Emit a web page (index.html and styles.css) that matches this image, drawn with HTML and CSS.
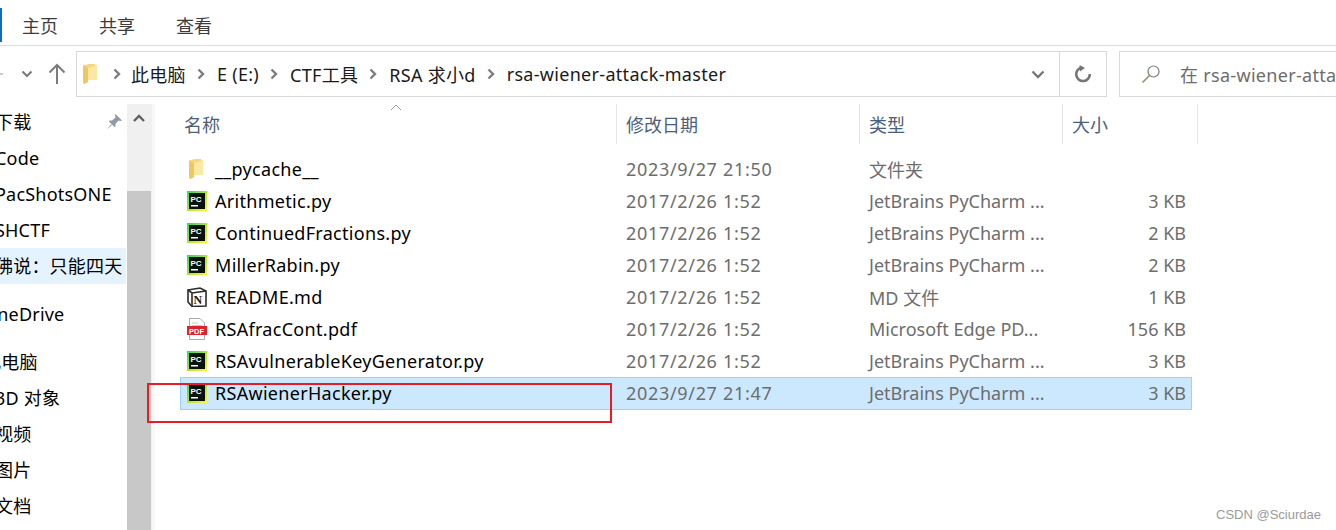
FILE: index.html
```html
<!DOCTYPE html>
<html lang="zh-CN">
<head>
    <meta charset="UTF-8">
    <title>rsa-wiener-attack-master</title>
    <link rel="stylesheet" href="styles.css">
</head>
<body>

    <!-- Shared icons -->
    <svg class="icon-defs" width="0" height="0">
        <symbol id="folder" viewBox="0 0 14 20">
            <path d="M0 1.5 L6 0 H12 V1 H14 V16 H5 V18 L1 20 L0 18 Z" fill="#f5d77f"/>
            <path d="M5 4 L12 2 V1 H14 V16 H5 Z" fill="#fce7a4"/>
            <path d="M0 1.5 L5 4 V18 L1 20 L0 18 Z" fill="#eec75f"/>
        </symbol>
        <symbol id="pycharm" viewBox="0 0 20 20">
            <defs>
                <linearGradient id="pcEdge" x1="0" y1="0" x2="1" y2="1">
                    <stop offset="0" stop-color="#21d789"/>
                    <stop offset="0.45" stop-color="#a8e02c"/>
                    <stop offset="1" stop-color="#fcf84a"/>
                </linearGradient>
            </defs>
            <rect width="20" height="20" fill="url(#pcEdge)"/>
            <rect x="2" y="2" width="16" height="16" fill="#07130c"/>
            <rect x="4" y="14" width="7" height="1.5" fill="#fff"/>
        </symbol>
        <symbol id="notion" viewBox="0 0 20 20">
            <path d="M1 3 L13 1 L19 4 V19 L5 19.5 L1 15 Z" fill="#fff" stroke="#2b2b2b" stroke-width="1.6"/>
            <path d="M1 3 L5 6 L19 4 M5 6 V19" fill="none" stroke="#2b2b2b" stroke-width="1.6"/>
        </symbol>
        <symbol id="pdf" viewBox="0 0 20 22">
            <path d="M2.5 .5 H13 L17.5 5 V21.5 H2.5 Z" fill="#fff" stroke="#a9a9a9"/>
            <path d="M5 5 H11 M5 7.5 H15" stroke="#c8c8c8"/>
            <rect y="8" width="20" height="9" fill="#d9232e"/>
        </symbol>
        <symbol id="crumb" viewBox="0 0 8 12">
            <path d="M1.5 1.5 L6 6 L1.5 10.5" fill="none" stroke="#7d7d7d" stroke-width="2.4"/>
        </symbol>
    </svg>

    <div class="window">

        <!-- Ribbon tabs -->
        <div class="ribbon">
            <span class="file-tab"></span>
            <span class="ribbon-tab">主页</span>
            <span class="ribbon-tab">共享</span>
            <span class="ribbon-tab">查看</span>
        </div>

        <!-- Address + search -->
        <div class="toolbar">
            <div class="nav-buttons">
                <svg class="back-tip" width="3" height="10" viewBox="0 0 3 10"><path d="M0 5 H3" stroke="#c9c9c9" stroke-width="2"/></svg>
                <svg class="recent" width="12" height="8" viewBox="0 0 12 8"><path d="M1.5 1.5 L6 6 L10.5 1.5" fill="none" stroke="#7a7a7a" stroke-width="2"/></svg>
                <svg class="up" width="18" height="22" viewBox="0 0 18 22"><path d="M9 21 V2 M1.5 9.5 L9 2 L16.5 9.5" fill="none" stroke="#7b7b7b" stroke-width="2"/></svg>
            </div>
            <div class="address">
                <svg class="address-folder" width="14" height="20"><use href="#folder"/></svg>
                <svg class="crumb first" width="8" height="12"><use href="#crumb"/></svg>
                <span>此电脑</span>
                <svg class="crumb" width="8" height="12"><use href="#crumb"/></svg>
                <span>E (E:)</span>
                <svg class="crumb" width="8" height="12"><use href="#crumb"/></svg>
                <span>CTF工具</span>
                <svg class="crumb" width="8" height="12"><use href="#crumb"/></svg>
                <span>RSA 求小d</span>
                <svg class="crumb" width="8" height="12"><use href="#crumb"/></svg>
                <span>rsa-wiener-attack-master</span>
                <div class="address-end">
                    <svg class="history" width="14" height="9" viewBox="0 0 14 9"><path d="M1.5 1.5 L7 7 L12.5 1.5" fill="none" stroke="#767676" stroke-width="2.4"/></svg>
                    <div class="refresh">
                        <svg width="18" height="18" viewBox="0 0 18 18"><path d="M8 2.5 A6.8 6.8 0 1 0 15.8 9" fill="none" stroke="#757575" stroke-width="2.6"/><path d="M5.5 0 L11 3 L6 6.5 Z" fill="#757575"/></svg>
                    </div>
                </div>
            </div>
            <div class="search">
                <svg width="20" height="20" viewBox="0 0 20 20"><circle cx="12.5" cy="7.5" r="5.5" fill="none" stroke="#7a7a7a" stroke-width="1.2"/><path d="M8.5 11.5 L1.5 18.5" stroke="#9c8a70" stroke-width="1.6"/></svg>
                <span>在 rsa-wiener-attack-master 中搜索</span>
            </div>
        </div>

        <div class="body-row">

            <!-- Navigation pane, cut at the left edge of the picture -->
            <div class="nav-pane">
                <div class="nav-item">下载<svg class="pin" width="16" height="16" viewBox="0 0 16 16"><path d="M9.5 0 L16 6.5 L14.5 7 L12.5 6.5 L9.5 10 L9.5 12.5 L8.5 13 L3 7.5 L3.5 6.5 L6 6.5 L9.5 3.5 L9 1.5 Z" fill="#8f9aa6"/><path d="M5 10 L0.5 15.5 L6 11.5 Z" fill="#b4bbc3"/></svg></div>
                <div class="nav-item">Code</div>
                <div class="nav-item">PacShotsONE</div>
                <div class="nav-item">SHCTF</div>
                <div class="nav-item selected">佛说：只能四天</div>
                <div class="nav-item top gap">OneDrive</div>
                <div class="nav-item top gap">此电脑</div>
                <div class="nav-item">3D 对象</div>
                <div class="nav-item">视频</div>
                <div class="nav-item">图片</div>
                <div class="nav-item">文档</div>
            </div>

            <div class="scrollbar">
                <svg class="scroll-up" width="12" height="8" viewBox="0 0 12 8"><path d="M1 7 L6 2 L11 7" fill="none" stroke="#606060" stroke-width="2.4"/></svg>
                <div class="scroll-thumb"></div>
            </div>

            <!-- File list -->
            <div class="content">
                <div class="list-head">
                    <div class="head-cell">名称<svg class="sort" width="12" height="7" viewBox="0 0 12 7"><path d="M1 6 L6 1 L11 6" fill="none" stroke="#9a9a9a"/></svg></div>
                    <div class="head-cell">修改日期</div>
                    <div class="head-cell">类型</div>
                    <div class="head-cell">大小</div>
                </div>

                <div class="file-row">
                    <div class="file-name"><svg class="file-icon folder-icon" width="14" height="20"><use href="#folder"/></svg>__pycache__</div>
                    <div class="file-meta date">2023/9/27 21:50</div>
                    <div class="file-meta">文件夹</div>
                    <div class="file-size"></div>
                </div>
                <div class="file-row">
                    <div class="file-name"><svg class="file-icon" width="20" height="20"><use href="#pycharm"/><text x="3.5" y="10.5" class="pc-text">PC</text></svg>Arithmetic.py</div>
                    <div class="file-meta date">2017/2/26 1:52</div>
                    <div class="file-meta">JetBrains PyCharm ...</div>
                    <div class="file-size">3 KB</div>
                </div>
                <div class="file-row">
                    <div class="file-name"><svg class="file-icon" width="20" height="20"><use href="#pycharm"/><text x="3.5" y="10.5" class="pc-text">PC</text></svg>ContinuedFractions.py</div>
                    <div class="file-meta date">2017/2/26 1:52</div>
                    <div class="file-meta">JetBrains PyCharm ...</div>
                    <div class="file-size">2 KB</div>
                </div>
                <div class="file-row">
                    <div class="file-name"><svg class="file-icon" width="20" height="20"><use href="#pycharm"/><text x="3.5" y="10.5" class="pc-text">PC</text></svg>MillerRabin.py</div>
                    <div class="file-meta date">2017/2/26 1:52</div>
                    <div class="file-meta">JetBrains PyCharm ...</div>
                    <div class="file-size">2 KB</div>
                </div>
                <div class="file-row">
                    <div class="file-name"><svg class="file-icon" width="20" height="20"><use href="#notion"/><text x="6.5" y="16.5" class="notion-text">N</text></svg>README.md</div>
                    <div class="file-meta date">2017/2/26 1:52</div>
                    <div class="file-meta">MD 文件</div>
                    <div class="file-size">1 KB</div>
                </div>
                <div class="file-row">
                    <div class="file-name"><svg class="file-icon" width="20" height="22"><use href="#pdf"/><text x="2" y="15.5" class="pdf-text">PDF</text></svg>RSAfracCont.pdf</div>
                    <div class="file-meta date">2017/2/26 1:52</div>
                    <div class="file-meta">Microsoft Edge PD...</div>
                    <div class="file-size">156 KB</div>
                </div>
                <div class="file-row">
                    <div class="file-name"><svg class="file-icon" width="20" height="20"><use href="#pycharm"/><text x="3.5" y="10.5" class="pc-text">PC</text></svg>RSAvulnerableKeyGenerator.py</div>
                    <div class="file-meta date">2017/2/26 1:52</div>
                    <div class="file-meta">JetBrains PyCharm ...</div>
                    <div class="file-size">3 KB</div>
                </div>
                <div class="file-row selected">
                    <div class="file-name"><svg class="file-icon" width="20" height="20"><use href="#pycharm"/><text x="3.5" y="10.5" class="pc-text">PC</text></svg>RSAwienerHacker.py</div>
                    <div class="file-meta date">2023/9/27 21:47</div>
                    <div class="file-meta">JetBrains PyCharm ...</div>
                    <div class="file-size">3 KB</div>
                </div>
            </div>
        </div>

        <!-- Red annotation drawn over the screenshot -->
        <div class="annotation"></div>
        <div class="watermark">CSDN @Sciurdae</div>
    </div>

</body>
</html>
```

FILE: styles.css
```css
html, body {
    margin: 0;
    padding: 0;
    background: #fff;
}

.icon-defs {
    position: absolute;
}

.window {
    position: relative;
    width: 1336px;
    height: 530px;
    overflow: hidden;
    font-family: "Noto Sans", "Noto Sans CJK SC", sans-serif;
    font-size: 18px;
    color: #000;
}

/* Ribbon */
.ribbon {
    position: relative;
    display: flex;
    align-items: center;
    height: 37px;
    padding-top: 6px;
    padding-bottom: 2px;
    padding-left: 22px;
    gap: 41px;
    border-bottom: 1px solid #dcdcdc;
    color: #3c3c3c;
}

.file-tab {
    position: absolute;
    left: 0;
    top: 8px;
    width: 2px;
    height: 34px;
    background: #0f6cbd;
}

.ribbon-tab {
    width: 36px;
    white-space: nowrap;
}

/* Address row */
.toolbar {
    display: flex;
    height: 46px;
    margin-top: 5px;
}

.nav-buttons {
    display: flex;
    align-items: center;
    width: 76px;
    flex-shrink: 0;
}

.back-tip {
    margin-right: 18px;
}

.recent {
    margin-right: 15px;
}

.address {
    display: flex;
    align-items: center;
    flex-shrink: 0;
    width: 1031px;
    box-sizing: border-box;
    border: 1px solid #d9d9d9;
    padding-left: 6px;
    white-space: nowrap;
    color: #1a1a1a;
    letter-spacing: 0.3px;
}

.address-folder {
    margin-right: 16px;
}

.crumb {
    margin: 0 12px 0 11px;
}

.crumb.first {
    margin-left: 0;
    margin-right: 10px;
}

.address-end {
    display: flex;
    align-items: center;
    margin-left: auto;
    height: 100%;
}

.history {
    margin-right: 14px;
}

.refresh {
    display: flex;
    align-items: center;
    justify-content: center;
    width: 46px;
    height: 100%;
    border-left: 1px solid #d9d9d9;
}

.search {
    display: flex;
    align-items: center;
    flex-shrink: 0;
    width: 340px;
    margin-left: 12px;
    box-sizing: border-box;
    border: 1px solid #d9d9d9;
    padding-left: 21px;
    gap: 19px;
    white-space: nowrap;
    color: #6d6d6d;
    letter-spacing: 0.3px;
}

.search svg {
    flex-shrink: 0;
}

/* Main area */
.body-row {
    display: flex;
    margin-top: 7px;
    height: 426px;
}

.nav-pane {
    width: 127px;
    flex-shrink: 0;
    overflow: hidden;
}

.nav-item {
    position: relative;
    height: 36px;
    line-height: 36px;
    text-indent: -5px;
    letter-spacing: 0.2px;
    white-space: nowrap;
}

.nav-item.selected {
    width: 126px;
    background: #e5f3ff;
}

.nav-item.top {
    text-indent: -17px;
}

.nav-item.gap {
    margin-top: 12px;
}

.pin {
    position: absolute;
    right: 5px;
    top: 10px;
}

.scrollbar {
    position: relative;
    width: 25px;
    flex-shrink: 0;
    background: #f0f0f0;
    border-right: 3px solid #f8f8f8;
}

.scroll-up {
    position: absolute;
    left: 6px;
    top: 10px;
}

.scroll-thumb {
    position: absolute;
    left: 0;
    top: 87px;
    bottom: 0;
    width: 24px;
    background: #c8c8c8;
}

/* File list */
.content {
    flex: 1;
    padding-left: 25px;
}

.list-head {
    display: grid;
    grid-template-columns: 437px 243px 203px 135px;
    height: 40px;
    color: #4c607a;
}

.head-cell {
    position: relative;
    display: flex;
    align-items: center;
    padding-left: 9px;
    border-right: 1px solid #e5e5e5;
    box-sizing: border-box;
}

.head-cell:first-child {
    padding-left: 4px;
}

.sort {
    position: absolute;
    left: 210px;
    top: 0;
}

.file-row {
    display: grid;
    grid-template-columns: 436px 243px 203px 130px;
    align-items: center;
    width: 1012px;
    height: 32px;
    color: #6d6d6d;
}

.list-head + .file-row {
    margin-top: 9px;
}

.file-row.selected {
    background: #cce8ff;
    box-shadow: inset 0 0 0 1px #99d1ff;
    height: 33px;
    padding-bottom: 1px;
    box-sizing: border-box;
}

.file-name {
    display: flex;
    align-items: center;
    color: #000;
    padding-left: 7px;
    letter-spacing: 0.3px;
    white-space: nowrap;
}

.file-icon {
    margin-right: 8px;
    flex-shrink: 0;
}

.folder-icon {
    margin-left: 2px;
    margin-right: 12px;
}

.file-meta {
    padding-left: 10px;
    white-space: nowrap;
}

.file-meta.date {
    letter-spacing: 0.68px;
}

.file-size {
    text-align: right;
    padding-right: 6px;
    white-space: nowrap;
}

/* SVG text inside the file icons */
.pc-text {
    font: bold 8px "Liberation Sans", sans-serif;
    letter-spacing: 0;
    fill: #fff;
}

.notion-text {
    font: bold 12px "Liberation Serif", serif;
    letter-spacing: 0;
    fill: #1a1a1a;
}

.pdf-text {
    font: bold 7.5px "Liberation Sans", sans-serif;
    letter-spacing: 0;
    fill: #fff;
}

/* Overlays */
.annotation {
    position: absolute;
    left: 147px;
    top: 383px;
    width: 461px;
    height: 36px;
    border: 2px solid #e81c24;
}

.watermark {
    position: absolute;
    left: 1216px;
    top: 507px;
    font: 13px "Liberation Sans", sans-serif;
    color: #9a9a9a;
}
```
